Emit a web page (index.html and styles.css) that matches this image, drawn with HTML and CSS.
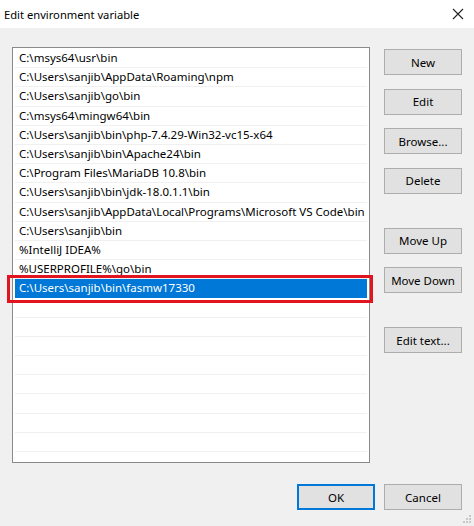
FILE: index.html
```html
<!DOCTYPE html>
<html>
<head>
<meta charset="utf-8">
<link rel="stylesheet" href="styles.css">
</head>
<body>
<div class="window">
  <div class="titlebar">
    <span class="title">Edit environment variable</span>
    <svg class="close" width="12" height="12" viewBox="0 0 12 12"><path d="M1 1 L11 11 M11 1 L1 11" stroke="#222" stroke-width="1.1" fill="none"/></svg>
  </div>
  <div class="content">
    <div class="listwrap">
      <div class="list">
        <div class="row">C:\msys64\usr\bin</div>
        <div class="row">C:\Users\sanjib\AppData\Roaming\npm</div>
        <div class="row">C:\Users\sanjib\go\bin</div>
        <div class="row">C:\msys64\mingw64\bin</div>
        <div class="row">C:\Users\sanjib\bin\php-7.4.29-Win32-vc15-x64</div>
        <div class="row">C:\Users\sanjib\bin\Apache24\bin</div>
        <div class="row">C:\Program Files\MariaDB 10.8\bin</div>
        <div class="row">C:\Users\sanjib\bin\jdk-18.0.1.1\bin</div>
        <div class="row">C:\Users\sanjib\AppData\Local\Programs\Microsoft VS Code\bin</div>
        <div class="row">C:\Users\sanjib\bin</div>
        <div class="row">%IntelliJ IDEA%</div>
        <div class="row">%USERPROFILE%\go\bin</div>
        <div class="row selected">C:\Users\sanjib\bin\fasmw17330</div>
        <div class="row"></div>
        <div class="row"></div>
        <div class="row"></div>
        <div class="row"></div>
        <div class="row"></div>
        <div class="row"></div>
        <div class="row"></div>
        <div class="row"></div>
        <div class="row"></div>
        <div class="row"></div>
      </div>
      <div class="highlight"></div>
    </div>
    <div class="buttons">
      <button class="btn">New</button>
      <button class="btn">Edit</button>
      <button class="btn">Browse...</button>
      <button class="btn">Delete</button>
      <button class="btn gap">Move Up</button>
      <button class="btn">Move Down</button>
      <button class="btn gap">Edit text...</button>
    </div>
  </div>
  <div class="footer">
    <button class="btn default">OK</button>
    <button class="btn">Cancel</button>
  </div>
  <svg class="grip" width="10" height="10" viewBox="0 0 10 10">
    <rect x="7" y="1" width="2" height="2" fill="#c8c8c8"/>
    <rect x="4" y="4" width="2" height="2" fill="#c8c8c8"/>
    <rect x="7" y="4" width="2" height="2" fill="#c8c8c8"/>
    <rect x="1" y="7" width="2" height="2" fill="#c8c8c8"/>
    <rect x="4" y="7" width="2" height="2" fill="#c8c8c8"/>
    <rect x="7" y="7" width="2" height="2" fill="#c8c8c8"/>
  </svg>
</div>
</body>
</html>
```
FILE: styles.css
```css
html, body {
  margin: 0;
  padding: 0;
}
body {
  width: 474px;
  height: 526px;
  overflow: hidden;
  background: #f0f0f0;
  font-family: "Noto Sans", "Open Sans", sans-serif;
  font-size: 11.5px;
  color: #000;
}
.window {
  position: relative;
  width: 474px;
  height: 526px;
  display: flex;
  flex-direction: column;
}
.titlebar {
  height: 28px;
  background: #fff;
  display: flex;
  align-items: center;
  justify-content: space-between;
  padding: 0 10px 0 4px;
}
.title {
  font-size: 11.2px;
  color: #000;
}
.close {
  display: block;
}
.content {
  display: flex;
  padding: 19px 0 0 12px;
}
.listwrap {
  position: relative;
}
.list {
  width: 358px;
  height: 416px;
  box-sizing: border-box;
  border: 1px solid #8a8a8a;
  background: #fff;
  overflow: hidden;
  padding: 1px 1px 0 1px;
}
.row {
  height: 19.2px;
  box-sizing: border-box;
  border-bottom: 1px solid #f0f0f0;
  margin: 0 1px;
  padding-left: 4px;
  line-height: 18px;
  white-space: nowrap;
  overflow: hidden;
}
.row.selected {
  background: #0078d7;
  color: #fff;
  border-bottom-color: #0078d7;
}
.highlight {
  position: absolute;
  left: -5px;
  top: 228px;
  width: 366px;
  height: 28px;
  box-sizing: border-box;
  border: 3px solid #e0151f;
  pointer-events: none;
}
.buttons {
  display: flex;
  flex-direction: column;
  gap: 13.5px;
  padding-top: 2px;
  margin-left: 14px;
}
.btn {
  width: 78px;
  height: 26px;
  box-sizing: border-box;
  background: #e1e1e1;
  border: 1px solid #adadad;
  font-family: "Noto Sans", "Open Sans", sans-serif;
  font-size: 11.5px;
  color: #000;
  padding: 0;
  margin: 0;
}
.btn.gap {
  margin-top: 20.5px;
}
.footer {
  display: flex;
  justify-content: flex-end;
  gap: 9px;
  padding-right: 12px;
  margin-top: 21px;
}
.btn.default {
  border: 2px solid #0078d7;
}
.grip {
  position: absolute;
  right: 2px;
  bottom: 2px;
}
```
